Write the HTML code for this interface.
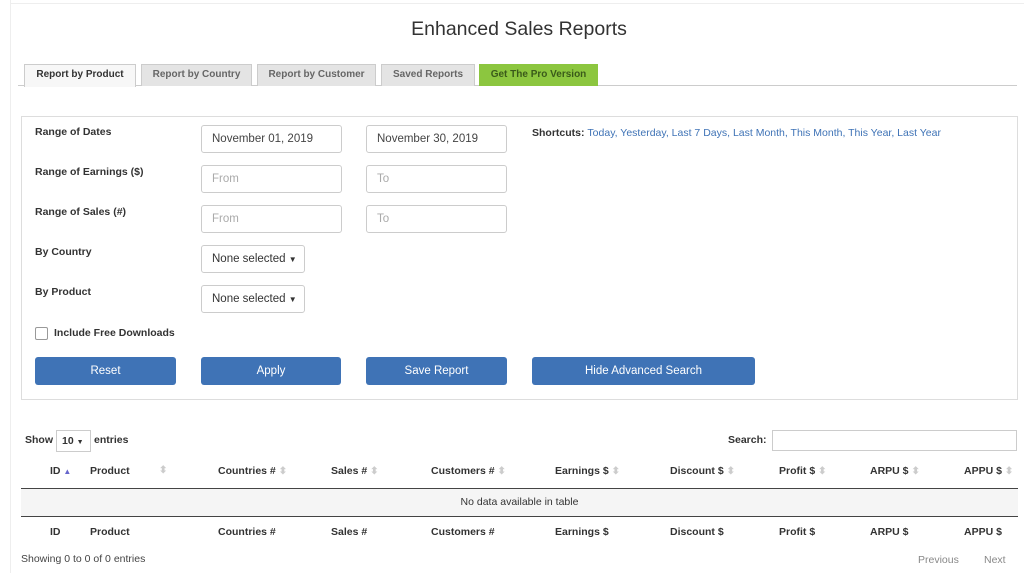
<!DOCTYPE html>
<html><head><meta charset="utf-8"><style>
*{margin:0;padding:0;box-sizing:border-box}
body{width:1024px;height:573px;overflow:hidden;background:#fff;font-family:"Liberation Sans",Arial,sans-serif;color:#333;position:relative;font-size:10.5px}
.a{position:absolute;white-space:nowrap}
.b{font-weight:bold}
.tab{position:absolute;top:64px;height:22px;background:#e4e4e4;border:1px solid #ccc;border-bottom:none;font-weight:bold;font-size:10px;color:#666;text-align:center;line-height:20px}
.inp{position:absolute;height:28px;width:141px;border:1px solid #ccc;border-radius:3px;font-size:11.5px;line-height:26px;padding-left:10px;color:#444}
.ph{color:#aaa}
.dd{position:absolute;left:201px;width:104px;height:28px;border:1px solid #ccc;border-radius:3px;font-size:11.5px;line-height:26px;padding-left:10px;color:#333}
.btn{position:absolute;top:357px;height:28px;background:#3f73b6;border-radius:3px;color:#fff;font-size:11.5px;text-align:center;line-height:28px}
.th{position:absolute;font-weight:bold;font-size:10.5px;color:#333}
.s{color:#ccc;font-size:10px}
</style></head><body>
<div class="a" style="left:10px;top:0;width:1px;height:573px;background:#eee"></div>
<div class="a" style="left:10px;top:3px;width:1014px;height:1px;background:#eee"></div>
<div class="a" style="left:0;width:1024px;top:18px;text-align:center;font-size:19.5px;color:#333;padding-left:14px">Enhanced Sales Reports</div>
<div class="a" style="left:18px;top:85px;width:999px;height:1px;background:#ccc"></div>
<div class="tab" style="left:24px;width:112px;background:#f7f7f7;color:#333;height:23px">Report by Product</div>
<div class="tab" style="left:141px;width:111px">Report by Country</div>
<div class="tab" style="left:257px;width:119px">Report by Customer</div>
<div class="tab" style="left:381px;width:94px">Saved Reports</div>
<div class="tab" style="left:479px;width:119px;background:#8cc63f;color:#3a5a1a;border-color:#8cc63f">Get The Pro Version</div>

<div class="a" style="left:21px;top:116px;width:997px;height:284px;border:1px solid #ddd"></div>
<div class="a b" style="left:35px;top:126px">Range of Dates</div>
<div class="a b" style="left:35px;top:166px">Range of Earnings ($)</div>
<div class="a b" style="left:35px;top:206px">Range of Sales (#)</div>
<div class="a b" style="left:35px;top:246px">By Country</div>
<div class="a b" style="left:35px;top:286px">By Product</div>
<div class="inp" style="left:201px;top:125px">November 01, 2019</div>
<div class="inp" style="left:366px;top:125px">November 30, 2019</div>
<div class="inp ph" style="left:201px;top:165px">From</div>
<div class="inp ph" style="left:366px;top:165px">To</div>
<div class="inp ph" style="left:201px;top:205px">From</div>
<div class="inp ph" style="left:366px;top:205px">To</div>
<div class="dd" style="top:245px">None selected <span style="font-size:8px">▼</span></div>
<div class="dd" style="top:285px">None selected <span style="font-size:8px">▼</span></div>
<div class="a b" style="left:532px;top:127px">Shortcuts: <span style="font-weight:normal;color:#3f73b6">Today, Yesterday, Last 7 Days, Last Month, This Month, This Year, Last Year</span></div>
<div class="a" style="left:35px;top:327px;width:13px;height:13px;border:1px solid #999;border-radius:2px"></div>
<div class="a b" style="left:54px;top:327px">Include Free Downloads</div>
<div class="btn" style="left:35px;width:141px">Reset</div>
<div class="btn" style="left:201px;width:140px">Apply</div>
<div class="btn" style="left:366px;width:141px">Save Report</div>
<div class="btn" style="left:532px;width:223px">Hide Advanced Search</div>

<div class="a b" style="left:25px;top:434px">Show</div>
<div class="a b" style="left:56px;top:430px;width:35px;height:22px;border:1px solid #ccc;line-height:20px;padding-left:5px">10 <span style="font-size:7px">▼</span></div>
<div class="a b" style="left:94px;top:434px">entries</div>
<div class="a b" style="left:728px;top:434px">Search:</div>
<div class="a" style="left:772px;top:430px;width:245px;height:21px;border:1px solid #ccc"></div>

<div class="th" style="left:50px;top:465px">ID <span style="color:#66c;font-size:8px">▲</span></div>
<div class="th" style="left:90px;top:465px">Product</div><div class="th s" style="left:159px;top:465px">⬍</div>
<div class="th" style="left:218px;top:465px">Countries # <span class="s">⬍</span></div>
<div class="th" style="left:331px;top:465px">Sales # <span class="s">⬍</span></div>
<div class="th" style="left:431px;top:465px">Customers # <span class="s">⬍</span></div>
<div class="th" style="left:555px;top:465px">Earnings $ <span class="s">⬍</span></div>
<div class="th" style="left:670px;top:465px">Discount $ <span class="s">⬍</span></div>
<div class="th" style="left:779px;top:465px">Profit $ <span class="s">⬍</span></div>
<div class="th" style="left:870px;top:465px">ARPU $ <span class="s">⬍</span></div>
<div class="th" style="left:964px;top:465px">APPU $ <span class="s">⬍</span></div>
<div class="a" style="left:21px;top:488px;width:997px;height:1px;background:#444"></div>
<div class="a" style="left:21px;top:489px;width:997px;height:28px;background:#f5f5f5;text-align:center;line-height:26px">No data available in table</div>
<div class="a" style="left:21px;top:516px;width:997px;height:1px;background:#444"></div>
<div class="th" style="left:50px;top:526px">ID</div>
<div class="th" style="left:90px;top:526px">Product</div>
<div class="th" style="left:218px;top:526px">Countries #</div>
<div class="th" style="left:331px;top:526px">Sales #</div>
<div class="th" style="left:431px;top:526px">Customers #</div>
<div class="th" style="left:555px;top:526px">Earnings $</div>
<div class="th" style="left:670px;top:526px">Discount $</div>
<div class="th" style="left:779px;top:526px">Profit $</div>
<div class="th" style="left:870px;top:526px">ARPU $</div>
<div class="th" style="left:964px;top:526px">APPU $</div>
<div class="a" style="left:21px;top:553px;color:#444">Showing 0 to 0 of 0 entries</div>
<div class="a" style="left:918px;top:554px;color:#888">Previous</div>
<div class="a" style="left:984px;top:554px;color:#888">Next</div>
</body></html>
